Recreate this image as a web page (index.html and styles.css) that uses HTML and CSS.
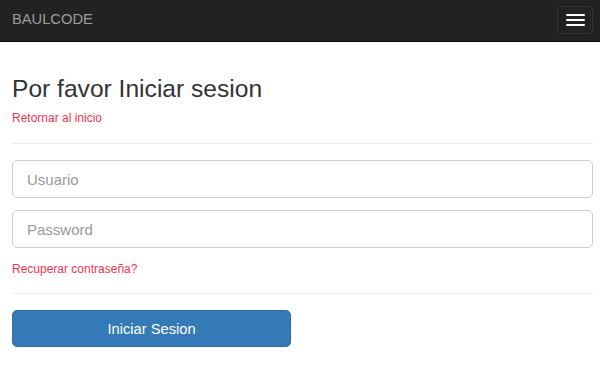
FILE: index.html
```html
<!DOCTYPE html>
<html lang="es">
<head>
<meta charset="utf-8">
<link rel="stylesheet" href="styles.css">
</head>
<body>
<nav class="navbar">
  <a class="brand" href="#">BAULCODE</a>
  <button class="toggle" type="button"><span class="bar"></span><span class="bar"></span><span class="bar"></span></button>
</nav>
<main class="container">
  <h2 class="title">Por favor Iniciar sesion</h2>
  <a class="link" href="#">Retornar al inicio</a>
  <hr class="rule rule-top">
  <form class="form">
    <input class="field" type="text" placeholder="Usuario">
    <input class="field" type="password" placeholder="Password">
    <a class="link recover" href="#">Recuperar contraseña?</a>
    <hr class="rule rule-bottom">
    <button class="submit" type="button">Iniciar Sesion</button>
  </form>
</main>
</body>
</html>
```
FILE: styles.css
```css
* { box-sizing: border-box; }
html, body { margin: 0; padding: 0; background: #fff; }
body { font-family: "Liberation Sans", Arial, sans-serif; color: #333; width: 600px; height: 370px; overflow: hidden; }
.navbar {
  height: 42px;
  background: #222;
  border-bottom: 1px solid #080808;
  display: flex;
  align-items: center;
  justify-content: space-between;
  padding: 0 7px 0 12px;
}
.brand { color: #9d9d9d; font-size: 14.7px; text-decoration: none; line-height: 1; margin-top: -2px; }
.toggle {
  width: 36px; height: 28px;
  background: transparent;
  border: 1px solid #333;
  border-radius: 4px;
  display: flex; flex-direction: column; align-items: center; justify-content: center;
  gap: 3px; padding: 0; margin-top: -1px;
}
.bar { display: block; width: 19px; height: 2px; background: #fff; border-radius: 1px; }
.container { padding: 0 7px 0 12px; }
.title { font-size: 24.6px; font-weight: 400; margin: 32px 0 0; line-height: 30px; color: #333; }
.link { display: block; color: #f9324f; font-size: 12px; text-decoration: none; line-height: 14px; }
.title + .link { margin-top: 7px; }
.rule { border: 0; border-top: 1px solid #eee; margin: 0; }
.rule-top { margin-top: 18px; }
.form { display: flex; flex-direction: column; }
.field {
  height: 38px;
  margin-top: 16px;
  border: 1px solid #ccc;
  border-radius: 5px;
  padding: 0 14px;
  font-family: "Liberation Sans", Arial, sans-serif;
  font-size: 15px;
  color: #555;
}
.field + .field { margin-top: 12px; }
.field::placeholder { color: #999; }
.recover { margin-top: 14px; }
.rule-bottom { margin-top: 17px; }
.submit {
  width: 279px; height: 37px;
  margin-top: 16px;
  background: #337ab7;
  border: 1px solid #2e6da4;
  border-radius: 5px;
  color: #fff;
  font-family: "Liberation Sans", Arial, sans-serif;
  font-size: 14.7px;
  padding: 0;
}
```
